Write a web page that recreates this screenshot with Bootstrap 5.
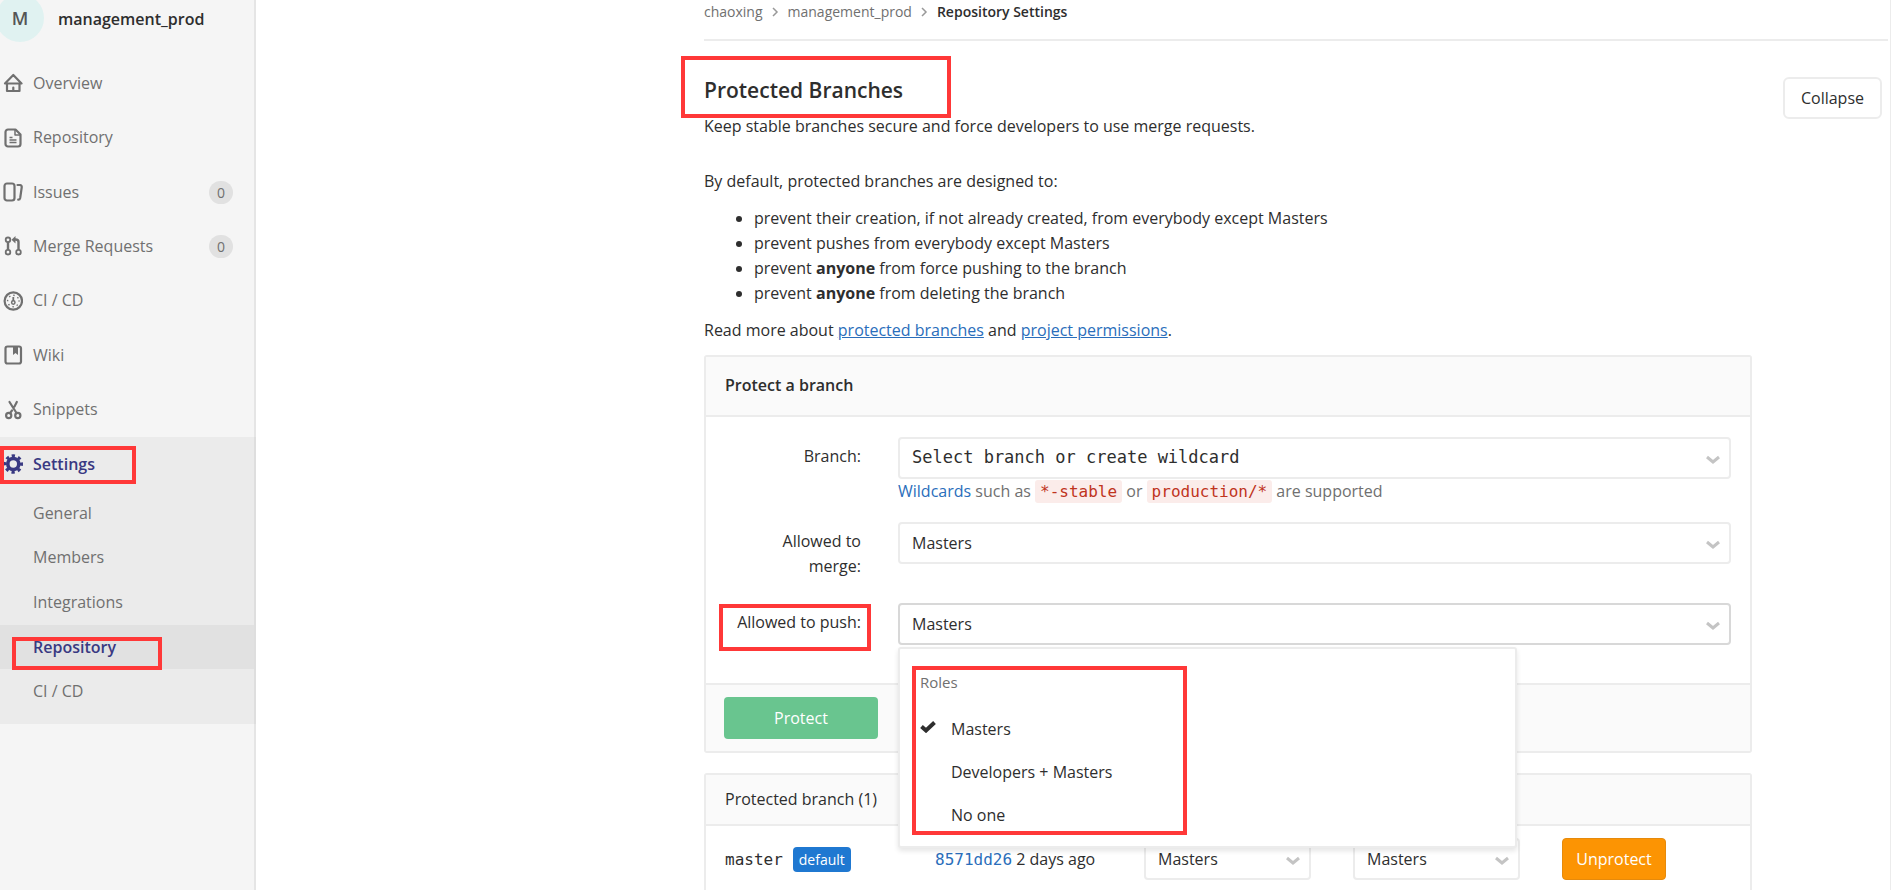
<!DOCTYPE html>
<html lang="en">
<head>
<meta charset="utf-8">
<meta name="viewport" content="width=device-width, initial-scale=1">
<title>Repository Settings · management_prod</title>
<link href="https://cdn.jsdelivr.net/npm/bootstrap@5.3.0/dist/css/bootstrap.min.css" rel="stylesheet">
<style>
  :root { --line: #ececec; --soft: #fafafa; --ink: #2e2e2e; --muted-ink: #707070; --link: #2a6ebb; --brand: #393982; --callout: #ff3838; }
  body { font-family: "Open Sans", "Noto Sans", sans-serif; font-size: 16px; line-height: 25px; color: var(--ink); }
  a { color: var(--link); }
  .mono { font-family: "DejaVu Sans Mono", monospace; }

  /* Sidebar */
  .sidebar { width: 256px; background: #f5f5f5; border-right: 2px solid #e5e5e5; }
  .project-link { height: 56px; color: var(--ink); }
  .avatar { width: 48px; height: 48px; margin: -20px 14px 0 -4px; background: #e0f2f1; color: #555; font-size: 18px; }
  .project-title { margin-top: -18px; }
  .main-items { height: 381px; }
  .side-link { color: var(--muted-ink); gap: 10px; padding: 0 21px 0 3px; }
  .side-link svg { width: 20px; height: 20px; }
  .counter { min-width: 24px; height: 23px; line-height: 23px; padding: 0 8px; background: #e1e1e1; font-size: 14px; }
  .active-section { background: #ebebeb; margin-right: -2px; padding-bottom: 10px; border-right: 2px solid #dedede; }
  .active-section > .side-link { height: 54px; color: var(--brand); }
  .sub-items { height: 223px; }
  .sub-items .side-link { padding-left: 33px; }
  .sub-items .current { background: #e1e1e1; color: var(--brand); }

  /* Page head */
  .content { padding-left: 448px; border-right: 1px solid var(--line); }
  .crumbs { height: 41px; padding-bottom: 16px; margin-right: 2px; gap: 9px; font-size: 14px; border-bottom: 2px solid var(--line); }
  .crumbs a { color: var(--muted-ink); }
  .section-head { padding: 36px 8px 0 0; }
  .section-head h1 { font-size: 21px; line-height: 26px; margin-bottom: 11px; }
  .section-body { padding-right: 138px; }
  .section-body p, .rules { margin-bottom: 12px; }
  .intro { padding-top: 30px; }
  .rules { padding-left: 50px; }
  .plain-btn { height: 42px; padding: 0 16px; border: 2px solid var(--line); font-size: 16px; color: var(--ink); background: #fff; }

  /* Panels and form */
  .panel { border: 2px solid var(--line); border-radius: 3px; margin-bottom: 20px; }
  .panel-head { padding: 16px 19px 17px; background: var(--soft); border-bottom: 2px solid var(--line); }
  .panel-body { display: grid; row-gap: 18px; padding: 20px 19px 38px 25px; }
  .panel-foot { padding: 12px 18px; background: var(--soft); border-top: 2px solid var(--line); }
  .list-head { padding: 12px 19px; }
  .field { display: grid; grid-template-columns: 130px 1fr; column-gap: 37px; }
  .field label { padding: 7px 0 6px; text-align: right; }
  .picker { height: 42px; padding: 0 34px 0 12px; border: 2px solid var(--line); border-radius: 4px; color: var(--ink); font-size: 16px;
    background-image: url("data:image/svg+xml,%3Csvg xmlns='http://www.w3.org/2000/svg' viewBox='0 0 14 10'%3E%3Cpath d='M1 2l6 5 6-5' fill='none' stroke='%23c4c4c4' stroke-width='3'/%3E%3C/svg%3E");
    background-size: 14px 10px; background-position: right 9px top 16px; }
  .picker.mono { font-size: 17px; }
  .picker.open { border-color: #d8d8d8; }
  .hint { color: var(--muted-ink); }
  .hint code { font-family: "DejaVu Sans Mono", monospace; font-size: 16px; color: #c0341d; background: #fbecea; padding: 2px 5px; border-radius: 3px; }

  /* Open role menu */
  .roles { top: 100%; left: 0; width: 619px; margin-top: 2px; padding: 22px 20px 10px; border: 2px solid var(--line); border-radius: 3px; background: #fff; box-shadow: 0 3px 5px rgba(0,0,0,.1); z-index: 5; }
  .roles .title { font-size: 15px; color: var(--muted-ink); line-height: 22px; margin-bottom: 14px; }
  .roles button { height: 43px; padding: 0; font-size: 16px; color: var(--ink); }
  .roles .tick { width: 16px; height: 12px; margin-right: 15px; margin-top: -4px; }
  .btn-protect { width: 154px; height: 42px; padding: 0; background: #69c58f; color: #fff; font-size: 16px; border-radius: 4px; }
  .btn-unprotect { width: 104px; height: 42px; padding: 0; background: #fc9403; border: 1px solid #e68a0c; color: #fff; font-size: 16px; border-radius: 4px; }

  /* Protected branch list */
  .branch-table { table-layout: fixed; }
  .branch-table td { padding: 12px 0 24px; vertical-align: middle; }
  .branch-table td:first-child { padding-left: 19px; }
  .branch-table .picker { width: 167px; }
  .col-name { width: 229px; }
  .col-commit { width: 209px; }
  .col-role { width: 209px; }
  .tag { margin-left: 10px; background: #1f78d1; color: #fff; font-size: 14px; line-height: 25px; padding: 0 6px; border-radius: 4px; }

  /* Callout frames */
  .callout-box { position: absolute; border: 4px solid var(--callout); pointer-events: none; z-index: 6; }
  .box-title { inset: -21px -48px -15px -23px; }
  .box-settings { left: 0; top: 9px; width: 136px; height: 38px; }
  .box-repo { left: 12px; top: 12px; width: 150px; height: 33px; }
  .box-push { inset: 1px -10px -6px -12px; }
  .box-roles { left: 12px; top: 17px; width: 275px; height: 169px; }
</style>
</head>
<body>
<div class="d-flex vh-100 overflow-hidden">

  <nav class="sidebar flex-shrink-0" aria-label="Project">
    <a href="#" class="project-link d-flex align-items-center text-decoration-none">
      <span class="avatar rounded-circle d-flex align-items-center justify-content-center fw-semibold">M</span>
      <span class="project-title fw-semibold">management_prod</span>
    </a>
    <ul class="main-items list-unstyled d-flex flex-column mb-0">
      <li class="flex-fill d-flex"><a href="#" class="side-link d-flex align-items-center w-100 text-decoration-none">
        <svg viewBox="0 0 20 20" fill="none" stroke="currentColor" stroke-width="2.200" stroke-linejoin="round" stroke-linecap="round"><path d="M2 10.500 10.300 2l8.200 8.500zM4 10.500V18h12.500v-7.500M10.300 18v-3.500"/></svg>Overview</a></li>
      <li class="flex-fill d-flex"><a href="#" class="side-link d-flex align-items-center w-100 text-decoration-none">
        <svg viewBox="0 0 20 20" fill="none" stroke="currentColor" stroke-width="2.200" stroke-linejoin="round"><path d="M5 1.500h7.500l5 5V16a2.500 2.500 0 0 1-2.500 2.500H5A2.500 2.500 0 0 1 2.500 16V4A2.500 2.500 0 0 1 5 1.500z"/><path d="M12 2v5h5.500M6.500 9.500h3M6.500 12h7M6.500 14.500h7" stroke-width="1.500"/></svg>Repository</a></li>
      <li class="flex-fill d-flex"><a href="#" class="side-link d-flex align-items-center w-100 text-decoration-none">
        <svg viewBox="0 0 20 20" fill="none" stroke="currentColor" stroke-width="2.200" stroke-linejoin="round" stroke-linecap="round"><rect x="1.500" y="1.500" width="10" height="17" rx="2.500"/><path d="M14.500 3h2.500q2 .3 1.700 2.500l-1.500 10.500q-.4 1.800-2 1.700"/></svg><span class="flex-fill">Issues</span><span class="counter rounded-pill text-center">0</span></a></li>
      <li class="flex-fill d-flex"><a href="#" class="side-link d-flex align-items-center w-100 text-decoration-none">
        <svg viewBox="0 0 20 20" fill="none" stroke="currentColor" stroke-width="1.800"><circle cx="5" cy="3.800" r="2.300"/><circle cx="5" cy="16.200" r="2.300"/><circle cx="15.500" cy="16.200" r="2.300"/><path d="M5 6v8M15.500 14V6q0-2.500-3-2.500h-1" stroke-width="2.400"/><path d="M12.500 0v7.500L8.500 3.700z" fill="currentColor" stroke="none"/></svg><span class="flex-fill">Merge Requests</span><span class="counter rounded-pill text-center">0</span></a></li>
      <li class="flex-fill d-flex"><a href="#" class="side-link d-flex align-items-center w-100 text-decoration-none">
        <svg viewBox="0 0 20 20" fill="none" stroke="currentColor" stroke-width="2.200"><circle cx="10.300" cy="10" r="8.700"/><circle cx="10.300" cy="11.500" r="1.700" stroke-width="1.500"/><path d="M10.300 10V6" stroke-width="1.800"/><circle cx="10.300" cy="10" r="5.700" stroke-width="1.400" stroke-dasharray="1.400 3.080" transform="rotate(-7 10.300 10)"/></svg>CI / CD</a></li>
      <li class="flex-fill d-flex"><a href="#" class="side-link d-flex align-items-center w-100 text-decoration-none">
        <svg viewBox="0 0 20 20" fill="none" stroke="currentColor" stroke-width="2.200"><rect x="2.500" y="1.500" width="15.500" height="17" rx="2"/><path d="M10 2h5v8l-2.500-2-2.500 2z" fill="currentColor" stroke="none"/></svg>Wiki</a></li>
      <li class="flex-fill d-flex"><a href="#" class="side-link d-flex align-items-center w-100 text-decoration-none">
        <svg viewBox="0 0 20 20" fill="none" stroke="currentColor" stroke-width="2.200" stroke-linecap="round"><circle cx="5.700" cy="15.500" r="2.600"/><circle cx="14.800" cy="15.500" r="2.600"/><path d="M6.500 2l7 11M13.800 2l-2.300 4.500M9 10.500l-2 2.700"/></svg>Snippets</a></li>
    </ul>
    <div class="active-section">
      <a href="#" class="side-link position-relative d-flex align-items-center text-decoration-none fw-semibold">
        <svg viewBox="0 0 20 20" fill="none" stroke="currentColor"><circle cx="10.300" cy="10" r="5.500" stroke-width="3.600"/><circle cx="10.300" cy="10" r="8.200" stroke-width="3" stroke-dasharray="3.200 3.240" transform="rotate(-101 10.300 10)"/></svg>Settings
        <span class="callout-box box-settings"></span></a>
      <ul class="sub-items list-unstyled d-flex flex-column mb-0">
        <li class="flex-fill d-flex"><a href="#" class="side-link d-flex align-items-center w-100 text-decoration-none">General</a></li>
        <li class="flex-fill d-flex"><a href="#" class="side-link d-flex align-items-center w-100 text-decoration-none">Members</a></li>
        <li class="flex-fill d-flex"><a href="#" class="side-link d-flex align-items-center w-100 text-decoration-none">Integrations</a></li>
        <li class="flex-fill d-flex position-relative"><a href="#" class="side-link current fw-semibold d-flex align-items-center w-100 text-decoration-none">Repository</a><span class="callout-box box-repo"></span></li>
        <li class="flex-fill d-flex"><a href="#" class="side-link d-flex align-items-center w-100 text-decoration-none">CI / CD</a></li>
      </ul>
    </div>
  </nav>

  <main class="content flex-fill">
    <nav class="crumbs d-flex align-items-center" aria-label="Breadcrumb">
      <a href="#" class="text-decoration-none">chaoxing</a>
      <svg width="7" height="10" viewBox="0 0 7 10" fill="none" stroke="#999" stroke-width="1.500"><path d="M1 1l4 4-4 4"/></svg>
      <a href="#" class="text-decoration-none">management_prod</a>
      <svg width="7" height="10" viewBox="0 0 7 10" fill="none" stroke="#999" stroke-width="1.500"><path d="M1 1l4 4-4 4"/></svg>
      <span class="fw-semibold">Repository Settings</span>
    </nav>

    <header class="section-head d-flex justify-content-between align-items-start">
      <div>
        <h1 class="position-relative d-table fw-semibold">Protected Branches<span class="callout-box box-title"></span></h1>
        <p class="mb-0">Keep stable branches secure and force developers to use merge requests.</p>
      </div>
      <button type="button" class="btn plain-btn">Collapse</button>
    </header>

    <section class="section-body">
      <p class="intro">By default, protected branches are designed to:</p>
      <ul class="rules">
        <li>prevent their creation, if not already created, from everybody except Masters</li>
        <li>prevent pushes from everybody except Masters</li>
        <li>prevent <strong>anyone</strong> from force pushing to the branch</li>
        <li>prevent <strong>anyone</strong> from deleting the branch</li>
      </ul>
      <p>Read more about <a href="#">protected branches</a> and <a href="#">project permissions</a>.</p>

      <form class="panel">
        <div class="panel-head fw-semibold">Protect a branch</div>
        <div class="panel-body">
          <div class="field">
            <label for="branch">Branch:</label>
            <div>
              <select id="branch" class="form-select picker mono"><option>Select branch or create wildcard</option></select>
              <div class="hint"><a href="#" class="text-decoration-none">Wildcards</a> such as <code>*-stable</code> or <code>production/*</code> are supported</div>
            </div>
          </div>
          <div class="field">
            <label for="merge">Allowed to merge:</label>
            <div><select id="merge" class="form-select picker"><option>Masters</option></select></div>
          </div>
          <div class="field">
            <div class="position-relative"><label for="push" class="d-block">Allowed to push:</label><span class="callout-box box-push"></span></div>
            <div class="position-relative">
              <select id="push" class="form-select picker open"><option>Masters</option></select>
              <div class="roles position-absolute">
                <div class="title">Roles</div>
                <button type="button" class="btn border-0 d-flex align-items-center"><svg class="tick" viewBox="0 0 16 12" fill="none" stroke="currentColor" stroke-width="4"><path d="M1.500 5.500l4.500 4 8.500-8"/></svg>Masters</button>
                <button type="button" class="btn border-0 d-flex align-items-center"><span class="tick"></span>Developers + Masters</button>
                <button type="button" class="btn border-0 d-flex align-items-center"><span class="tick"></span>No one</button>
                <span class="callout-box box-roles"></span>
              </div>
            </div>
          </div>
        </div>
        <div class="panel-foot"><button type="button" class="btn btn-protect border-0">Protect</button></div>
      </form>

      <div class="panel">
        <div class="panel-head list-head">Protected branch (1)</div>
        <table class="branch-table w-100">
          <colgroup><col class="col-name"><col class="col-commit"><col class="col-role"><col class="col-role"><col></colgroup>
          <tbody><tr>
            <td><span class="mono">master</span><span class="tag d-inline-block">default</span></td>
            <td><a href="#" class="mono text-decoration-none">8571dd26</a> 2 days ago</td>
            <td><select class="form-select picker" aria-label="Allowed to merge"><option>Masters</option></select></td>
            <td><select class="form-select picker" aria-label="Allowed to push"><option>Masters</option></select></td>
            <td><button type="button" class="btn btn-unprotect">Unprotect</button></td>
          </tr></tbody>
        </table>
      </div>
    </section>
  </main>
</div>
<script src="https://cdn.jsdelivr.net/npm/bootstrap@5.3.0/dist/js/bootstrap.bundle.min.js"></script>
</body>
</html>
